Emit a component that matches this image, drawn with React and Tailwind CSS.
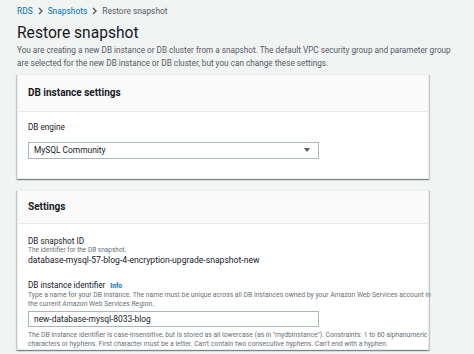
import React from 'react';

const Chevron = () => (
  <svg width="5" height="8" viewBox="0 0 5 8" className="shrink-0">
    <path d="M1 1l3 3-3 3" fill="none" stroke="#545b64" strokeWidth="1.4" />
  </svg>
);

const Card = ({ title, headerH, children }) => (
  <div className="bg-white border border-[#eaeded] shadow-[0_1px_1px_0_rgba(0,28,36,0.3),1px_1px_1px_0_rgba(0,28,36,0.15),-1px_1px_1px_0_rgba(0,28,36,0.15)]">
    <div className={`bg-[#fafafa] border-b border-[#eaeded] px-[10px] flex items-center ${headerH}`}>
      <h2 className="text-[10px] font-bold text-[#16191f]">{title}</h2>
    </div>
    <div className="px-[10px]">{children}</div>
  </div>
);

export default function App() {
  return (
    <div
      className="w-[474px] h-[354px] overflow-hidden bg-[#f2f3f3] text-[#16191f]"
      style={{ fontFamily: 'Roboto, "Open Sans", sans-serif' }}
    >
      <div className="pl-[17px] w-[429px]">
        {/* Breadcrumbs */}
        <nav className="flex items-center gap-[5px] text-[8.4px] h-[22px]">
          <span className="text-[#0073bb]">RDS</span>
          <Chevron />
          <span className="text-[#0073bb]">Snapshots</span>
          <Chevron />
          <span className="text-[#545b64]">Restore snapshot</span>
        </nav>

        <h1 className="text-[15.6px] leading-[20px] mt-[1px] text-[#16191f]">Restore snapshot</h1>
        <div className="text-[8.2px] leading-[13px] text-[#545b64] mt-[0.5px] whitespace-nowrap">
          <div>You are creating a new DB instance or DB cluster from a snapshot. The default VPC security group and parameter group</div>
          <div>are selected for the new DB instance or DB cluster, but you can change these settings.</div>
        </div>

        <div className="mt-[4px] flex flex-col gap-[11px]">
          <Card title="DB instance settings" headerH="h-[37px]">
            <div className="pt-[10px] pb-[19px]">
              <div className="text-[8.2px] leading-[10px]">DB engine</div>
              <div className="mt-[10px] w-[291px] h-[17px] border border-[#aab7b8] flex items-center justify-between px-[5px]">
                <span className="text-[8.4px]">MySQL Community</span>
                <svg width="6" height="4" viewBox="0 0 6 4" className="mr-[3px]">
                  <path d="M0 0h6L3 4z" fill="#545b64" />
                </svg>
              </div>
            </div>
          </Card>

          <Card title="Settings" headerH="h-[33px]">
            <div className="pt-[12px]">
              <div className="text-[8.2px] leading-[10px]">DB snapshot ID</div>
              <div className="text-[6.5px] leading-[8px] text-[#687078]">The identifier for the DB snapshot.</div>
              <div className="text-[8.6px] leading-[11px] mt-[1.5px]">database-mysql-57-blog-4-encryption-upgrade-snapshot-new</div>

              <div className="mt-[14px] flex items-baseline gap-[5px] h-[10px]">
                <span className="text-[8.2px] leading-[10px]">DB instance identifier</span>
                <span className="text-[6.6px] leading-[10px] font-bold text-[#0073bb]">Info</span>
              </div>
              <div className="text-[6.8px] leading-[9px] text-[#687078] mt-[0.5px] whitespace-nowrap">
                <div>Type a name for your DB instance. The name must be unique across all DB instances owned by your Amazon Web Services account in</div>
                <div>the current Amazon Web Services Region.</div>
              </div>
              <div className="mt-[2.5px] w-[291px] h-[16px] border border-[#aab7b8] flex items-center px-[5px]">
                <span className="text-[8.4px]">new-database-mysql-8033-blog</span>
              </div>
              <div className="text-[6.8px] leading-[9px] text-[#687078] mt-[3.5px] whitespace-nowrap">
                <div>The DB instance identifier is case-insensitive, but is stored as all lowercase (as in "mydbinstance"). Constraints: 1 to 60 alphanumeric</div>
                <div>characters or hyphens. First character must be a letter. Can't contain two consecutive hyphens. Can't end with a hyphen.</div>
              </div>
            </div>
          </Card>
        </div>
      </div>
    </div>
  );
}
